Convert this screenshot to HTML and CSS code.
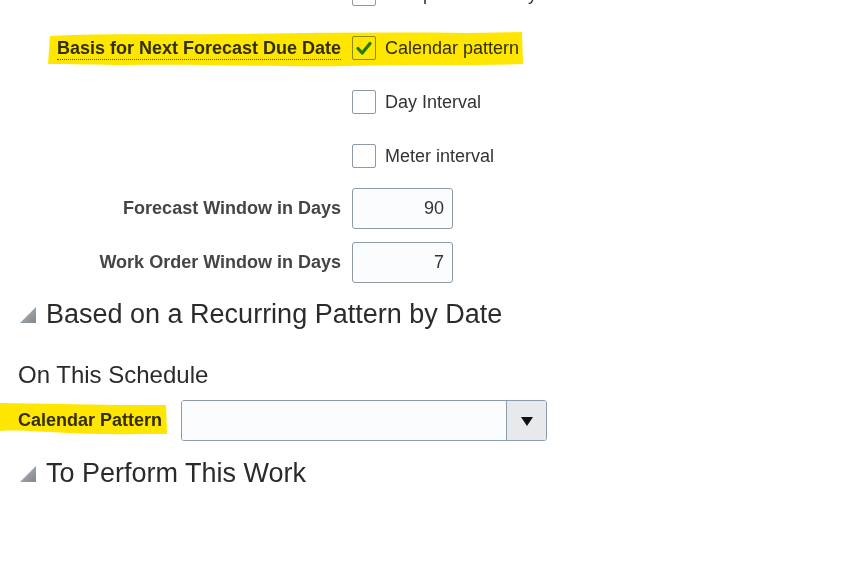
FILE: index.html
```html
<!DOCTYPE html>
<html>
<head>
<meta charset="utf-8">
<link rel="stylesheet" href="styles.css">
</head>
<body>
<div class="page">
  <div class="form">
    <div class="row cb-row">
      <div class="lbl"></div>
      <div class="field"><span class="cb"></span><span class="cb-text">Completion Activity</span></div>
    </div>
    <div class="row cb-row">
      <div class="lbl"><span class="dotted">Basis for Next Forecast Due Date</span></div>
      <div class="field"><span class="cb checked"><svg viewBox="0 0 22 22" width="22" height="22"><path d="M5 11.5 L9.2 16 L17 6.5" fill="none" stroke="#1e8a22" stroke-width="3.2" stroke-linecap="round" stroke-linejoin="round"/></svg></span><span class="cb-text">Calendar pattern</span></div>
    </div>
    <div class="row cb-row">
      <div class="lbl"></div>
      <div class="field"><span class="cb"></span><span class="cb-text">Day Interval</span></div>
    </div>
    <div class="row cb-row">
      <div class="lbl"></div>
      <div class="field"><span class="cb"></span><span class="cb-text">Meter interval</span></div>
    </div>
    <div class="row in-row first-in">
      <div class="lbl">Forecast Window in Days</div>
      <div class="field"><span class="num">90</span></div>
    </div>
    <div class="row in-row">
      <div class="lbl">Work Order Window in Days</div>
      <div class="field"><span class="num">7</span></div>
    </div>
  </div>

  <div class="section-head h1">
    <span class="disc"></span><span class="sh-text">Based on a Recurring Pattern by Date</span>
  </div>

  <div class="sub-head">On This Schedule</div>

  <div class="sel-row">
    <div class="sel-lbl">Calendar Pattern</div>
    <div class="select"><span class="sel-box"></span><span class="sel-btn"><span class="arrow"></span></span></div>
  </div>

  <div class="section-head h2">
    <span class="disc"></span><span class="sh-text">To Perform This Work</span>
  </div>

  <svg class="hl hl1" viewBox="0 0 476 35" width="476" height="35" preserveAspectRatio="none"><path d="M2 4 C60 1 120 3 180 2 C260 1 340 0 420 1 L474 0 L475 32 C420 34 360 32 300 34 C220 35 150 32 80 33 C50 33 20 32 0 32 Z" fill="#ffe600"/></svg>
  <svg class="hl hl2" viewBox="0 0 168 36" width="168" height="36" preserveAspectRatio="none"><path d="M0 3 C40 4 80 4 120 5 L166 5 L167 34 C130 34 90 35 50 32 C30 31 12 30 0 31 Z" fill="#ffe600"/></svg>
</div>
</body>
</html>
```

FILE: styles.css
```css
html, body {
  margin: 0;
  padding: 0;
  background: #ffffff;
}
body {
  font-family: Arial, "Liberation Sans", sans-serif;
  color: #333333;
  overflow: hidden;
  width: 853px;
  height: 561px;
}
.page {
  position: relative;
  width: 853px;
  height: 561px;
  overflow: hidden;
}
.form {
  margin-top: -33px;
}
.row {
  display: grid;
  grid-template-columns: 341px 1fr;
  column-gap: 11px;
  align-items: center;
  height: 54px;
}
.first-in {
  margin-top: -2px;
}
.lbl {
  text-align: right;
  font-weight: bold;
  font-size: 18px;
  color: #454545;
}
.dotted {
  color: #333333;
  border-bottom: 1px dotted #555555;
  padding-bottom: 1px;
}
.field {
  display: flex;
  align-items: center;
}
.cb {
  width: 22px;
  height: 22px;
  border: 1px solid #8d9aa8;
  border-radius: 2px;
  background: #ffffff;
  box-sizing: content-box;
  display: flex;
  align-items: center;
  justify-content: center;
}
.cb svg {
  display: block;
}
.cb-text {
  margin-left: 9px;
  font-size: 18px;
  color: #333333;
}
.num {
  display: block;
  height: 39px;
  line-height: 39px;
  border: 1px solid #8d9aa8;
  border-radius: 3px;
  background: #fbfcfd;
  text-align: right;
  padding-right: 8px;
  box-sizing: content-box;
  width: 91px;
  font-size: 18px;
  color: #333333;
}
.section-head {
  display: flex;
  align-items: baseline;
  padding-left: 20px;
  height: 30px;
  line-height: 30px;
}
.section-head.h1 {
  margin-top: 10px;
}
.section-head.h2 {
  margin-top: 17px;
}
.disc {
  display: inline-block;
  width: 16px;
  height: 16px;
  background: linear-gradient(135deg, #b4b9be, #7f868d);
  clip-path: polygon(100% 0, 100% 100%, 0 100%);
  margin-right: 10px;
  align-self: center;
  position: relative;
  top: 1px;
}
.sh-text {
  font-size: 27px;
  color: #2b2b2b;
}
.sub-head {
  margin-top: 33px;
  padding-left: 18px;
  font-size: 24px;
  line-height: 26px;
  color: #2b2b2b;
}
.sel-row {
  margin-top: 12px;
  display: flex;
  align-items: center;
  padding-left: 18px;
}
.sel-lbl {
  width: 163px;
  font-weight: bold;
  font-size: 18px;
  color: #333333;
}
.select {
  display: flex;
  height: 41px;
  width: 366px;
  border: 1px solid #8d9aa8;
  border-radius: 3px;
  box-sizing: border-box;
  overflow: hidden;
}
.sel-box {
  flex: 1;
  background: #fbfcfd;
}
.sel-btn {
  width: 39px;
  border-left: 1px solid #8d9aa8;
  background: #e6eaed;
  display: flex;
  align-items: center;
  justify-content: center;
}
.arrow {
  width: 0;
  height: 0;
  border-left: 6px solid transparent;
  border-right: 6px solid transparent;
  border-top: 9px solid #111111;
  margin-top: 2px;
}
.hl {
  position: absolute;
  mix-blend-mode: multiply;
  pointer-events: none;
}
.hl1 {
  left: 48px;
  top: 32px;
}
.hl2 {
  left: 0;
  top: 400px;
}
```
